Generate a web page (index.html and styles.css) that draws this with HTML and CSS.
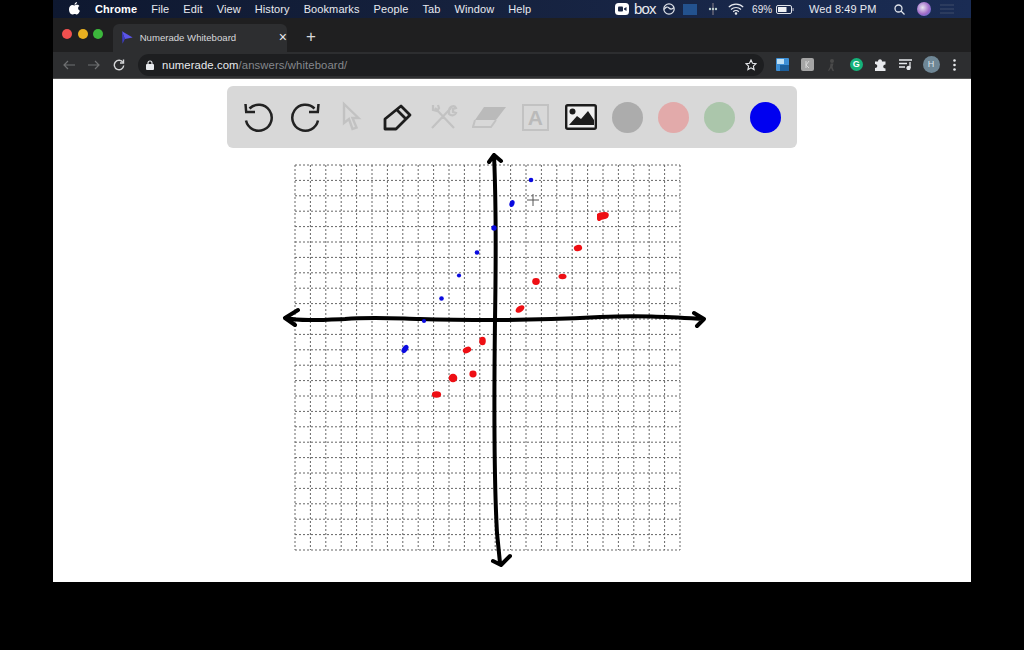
FILE: index.html
```html
<!DOCTYPE html>
<html lang="en">
<head>
    <meta charset="UTF-8">
    <meta name="viewport" content="width=device-width, initial-scale=1.0">
    <title>Numerade Whiteboard</title>
    <link rel="stylesheet" href="styles.css">
</head>
<body>
    <div class="screen">
        <!-- mac menu bar -->
        <div class="menubar">
            <svg class="apple" width="11" height="13" viewBox="0 0 11 13"><path d="M8 0c.1 1-.9 2.700-2.500 2.700C5.400 1.400 6.700.2 8 0zM5.500 3.400c.6 0 1.400-.6 2.500-.6 1 0 1.900.5 2.400 1.300-1.900 1.100-1.600 3.800.5 4.600-.6 1.500-1.700 3.700-3 3.700-.9 0-1.200-.5-2.200-.5s-1.400.5-2.200.5C1.200 12.400 0 9.500 0 7.200c0-2.700 1.700-4.300 3.300-4.300 1 0 1.700.5 2.200.5z" fill="#fff"/></svg>
            <span class="app-name">Chrome</span>
            <span>File</span>
            <span>Edit</span>
            <span>View</span>
            <span>History</span>
            <span>Bookmarks</span>
            <span>People</span>
            <span>Tab</span>
            <span>Window</span>
            <span>Help</span>
            <div class="status">
                <svg width="14" height="12" viewBox="0 0 14 12"><rect width="14" height="12" rx="3.500" fill="#fff"/><rect x="3" y="3.500" width="5" height="5" rx="1" fill="#1a2745"/><path d="M9 5.500l2.500-1.500v4L9 6.500z" fill="#1a2745"/></svg>
                <span class="box-logo">box</span>
                <svg class="st-sync" width="12" height="12" viewBox="0 0 12 12" fill="none" stroke="#dfe3ea" stroke-width="1.200"><circle cx="6" cy="6" r="5.200"/><path d="M1 6.500c2-3 3.500-3 5-1.500s3 1.500 5-.5"/></svg>
                <span class="blue-box"></span>
                <svg class="st-dots" width="10" height="12" viewBox="0 0 10 12"><path d="M5 0v12" stroke="#667" stroke-width="1.500"/><circle cx="2" cy="6" r="1.200" fill="#bcc"/><circle cx="5" cy="6" r="1.200" fill="#bcc"/><circle cx="8" cy="6" r="1.200" fill="#bcc"/></svg>
                <svg class="st-wifi" width="16" height="12" viewBox="0 0 16 12" fill="none" stroke="#e6e9ef" stroke-width="1.200"><path d="M.8 4.200c4-4 10.400-4 14.400 0M3 6.500c2.800-2.700 7.200-2.700 10 0M5.200 8.700c1.500-1.400 4.100-1.400 5.600 0"/><circle cx="8" cy="10.500" r=".7" fill="#e6e9ef"/></svg>
                <span class="battery-pct">69%</span>
                <svg class="st-battery" width="18" height="9" viewBox="0 0 18 9"><rect x=".5" y=".5" width="15" height="8" rx="1.500" fill="none" stroke="#dfe3ea"/><rect x="2" y="2" width="8.500" height="5" fill="#eef0f4"/><rect x="16.500" y="3" width="1.200" height="3" fill="#aab"/></svg>
                <span class="clock">Wed 8:49 PM</span>
                <svg class="st-search" width="11" height="11" viewBox="0 0 11 11" fill="none" stroke="#dfe3ea" stroke-width="1.300"><circle cx="4.500" cy="4.500" r="3.500"/><path d="M7 7l3.500 3.500"/></svg>
                <span class="siri"></span>
                <svg class="st-list" width="14" height="10" viewBox="0 0 14 10" stroke="#3f4c6b"><path d="M0 1h14M0 5h14M0 9h14"/></svg>
            </div>
        </div>

        <!-- chrome tabs -->
        <div class="tabstrip">
            <div class="lights">
                <span class="light red"></span>
                <span class="light yellow"></span>
                <span class="light green"></span>
            </div>
            <div class="tab">
                <svg width="13" height="13" viewBox="0 0 13 13"><path d="M1 0l11 6.500L4 8z" fill="#5b55ea"/><path d="M1 0l3 8-2.500 5z" fill="#3d3cc4"/></svg>
                <span class="tab-title">Numerade Whiteboard</span>
                <span class="tab-close">×</span>
            </div>
            <span class="new-tab">+</span>
        </div>

        <!-- chrome address bar -->
        <div class="addressbar">
            <svg width="12" height="10" viewBox="0 0 12 10" fill="none" stroke="#6f7072" stroke-width="1.200"><path d="M12 5H1M5 1L1 5l4 4"/></svg>
            <svg width="12" height="10" viewBox="0 0 12 10" fill="none" stroke="#6f7072" stroke-width="1.200"><path d="M0 5h11M7 1l4 4-4 4"/></svg>
            <svg width="12" height="12" viewBox="0 0 12 12" fill="none" stroke="#d5d6d8" stroke-width="1.400"><path d="M10 3.500A4.700 4.700 0 1 0 10.700 6.500"/><path d="M10.500 .5v3.500H7" /></svg>
            <div class="urlbar">
                <svg width="8" height="10" viewBox="0 0 8 10"><rect y="4" width="8" height="6" rx="1" fill="#e8eaed"/><path d="M2 4.500V3a2 2 0 0 1 4 0v1.500" fill="none" stroke="#e8eaed" stroke-width="1.100"/></svg>
                <span class="url"><span class="url-host">numerade.com</span>/answers/whiteboard/</span>
                <svg class="star" width="12" height="12" viewBox="0 0 12 12"><path d="M6 1l1.500 3.300 3.500.4-2.600 2.400.7 3.500L6 8.800l-3.100 1.800.7-3.500L1 4.700l3.500-.4z" fill="none" stroke="#e8eaed" stroke-width="1.100"/></svg>
            </div>
            <div class="extensions">
                <svg width="13" height="13" viewBox="0 0 13 13"><rect width="13" height="13" rx="1" fill="#3d8fd6"/><rect x="1" y="1" width="7" height="5" fill="#bfe0f5"/><rect x="4" y="7" width="9" height="6" fill="#1c5f9c"/></svg>
                <svg width="13" height="13" viewBox="0 0 13 13"><rect width="13" height="13" rx="2" fill="#a5a5a5"/><path d="M5 3v7M5 7l3-4M5 7l3 3" stroke="#d8d8d8" fill="none"/></svg>
                <svg width="13" height="13" viewBox="0 0 13 13" fill="#4a4a4a"><circle cx="7" cy="3" r="2"/><path d="M5.500 5.500h3L7.500 9 9 13H7.500L6 10l-2 3-1-.5L5 9z"/></svg>
                <span class="grammarly">G</span>
                <svg width="13" height="13" viewBox="0 0 13 13"><path d="M1 3.500h3c0-3 4-3 4 0h3.500v3c-3 0-3 4 0 4V13H1v-3c3 0 3-4 0-4z" fill="#e8eaed"/></svg>
                <svg width="14" height="11" viewBox="0 0 14 11" fill="none" stroke="#e8eaed" stroke-width="1.300"><path d="M0 1h13M0 4.500h8M0 8h6M11 3v6"/><circle cx="9.500" cy="9" r="1.500" fill="#e8eaed"/></svg>
                <span class="avatar">H</span>
                <svg width="3" height="12" viewBox="0 0 3 12" fill="#e8eaed"><circle cx="1.500" cy="1.500" r="1.300"/><circle cx="1.500" cy="6" r="1.300"/><circle cx="1.500" cy="10.500" r="1.300"/></svg>
            </div>
        </div>

        <!-- page -->
        <div class="page">
            <div class="toolbar">
                <button class="tool">
                    <svg width="32" height="32" viewBox="0 0 32 32" fill="none" stroke="#222" stroke-width="2.500"><path d="M6.500 7.500A13 13 0 1 1 3 19.500"/><path d="M2.500 3l.7 8h8.800"/></svg>
                </button>
                <button class="tool">
                    <svg width="32" height="32" viewBox="0 0 32 32" fill="none" stroke="#222" stroke-width="2.500"><path d="M25.500 7.500A13 13 0 1 0 29 19.500"/><path d="M29.500 3l-.7 8H20"/></svg>
                </button>
                <button class="tool">
                    <svg width="32" height="32" viewBox="0 0 32 32" fill="none" stroke="#c2c2c2" stroke-width="2.400"><path d="M9 3v19l5-4 3.500 10 4-1.500-4-9.500h6z"/></svg>
                </button>
                <button class="tool">
                    <svg width="32" height="32" viewBox="0 0 32 32" fill="none" stroke="#1c1c1c" stroke-width="2.800" stroke-linejoin="round"><path d="M4 18L20 5l9 9-14 14H4zM16 9l9 9"/></svg>
                </button>
                <button class="tool">
                    <svg width="32" height="32" viewBox="0 0 32 32" fill="none" stroke="#c2c2c2" stroke-width="2.200"><path d="M8 7l19 20M24 7L5 27M6 4v5l4 1 2-3-1-3M22 9c1-4 6-5 7-2l-3 1v3l3 1c-1 3-5 3-7 1z"/></svg>
                </button>
                <button class="tool">
                    <svg width="34" height="32" viewBox="0 0 34 32"><path d="M12 6h22L24 19H3z" fill="#bababa"/><path d="M3 19l-2 7h18l5-7" fill="none" stroke="#c2c2c2" stroke-width="2"/></svg>
                </button>
                <button class="tool">
                    <span class="text-tool">A</span>
                </button>
                <button class="tool">
                    <svg width="32" height="26" viewBox="0 0 32 26"><rect x="1.200" y="1.200" width="29.600" height="23.600" rx="1.500" fill="#f0f0f0" stroke="#1c1c1c" stroke-width="2.400"/><circle cx="7.500" cy="7.500" r="3" fill="#1c1c1c"/><path d="M4 21l8-9 4 3 7-8 6 9v5z" fill="#1c1c1c"/></svg>
                </button>
                <button class="tool"><span class="swatch swatch-gray"></span></button>
                <button class="tool"><span class="swatch swatch-red"></span></button>
                <button class="tool"><span class="swatch swatch-green"></span></button>
                <button class="tool"><span class="swatch swatch-blue"></span></button>
            </div>

            <!-- viewBox uses screen coordinates so the plot is easy to read off -->
            <svg class="board" width="440" height="422" viewBox="280 148 440 422">
                <path class="grid" d="M295 165V550M310.400 165V550M325.800 165V550M341.200 165V550M356.600 165V550M372 165V550M387.400 165V550M402.800 165V550M418.200 165V550M433.600 165V550M449 165V550M464.400 165V550M479.800 165V550M495.200 165V550M510.600 165V550M526 165V550M541.400 165V550M556.800 165V550M572.200 165V550M587.600 165V550M603 165V550M618.400 165V550M633.800 165V550M649.200 165V550M664.600 165V550M680 165V550"/>
                <path class="grid" d="M295 165H680M295 180.400H680M295 195.800H680M295 211.200H680M295 226.600H680M295 242H680M295 257.400H680M295 272.800H680M295 288.200H680M295 303.600H680M295 319H680M295 334.400H680M295 349.800H680M295 365.200H680M295 380.600H680M295 396H680M295 411.400H680M295 426.800H680M295 442.200H680M295 457.600H680M295 473H680M295 488.400H680M295 503.800H680M295 519.200H680M295 534.600H680M295 550H680"/>

                <path class="axis" d="M298 310L285 318L295 325M285 318C300 321 320 320 345 319C370 317 385 318 420 319C450 320 470 320 495 320C530 320 560 319 600 317C640 315 670 317 704 319M694 313L704 319L697 326"/>
                <path class="axis" d="M489 162L494 155L501 161M494 155C496 200 496 260 495 320C494 400 494 480 497 533L500 563M493 561L501 565L510 556"/>

                <g class="blue-dots">
                    <circle cx="531" cy="180" r="2.300"/>
                    <ellipse cx="512" cy="203.500" rx="2.500" ry="3.400" transform="rotate(20 512 203.500)"/>
                    <circle cx="494" cy="228" r="2.700"/>
                    <circle cx="477" cy="252.500" r="2.300"/>
                    <circle cx="459" cy="275.500" r="2.100"/>
                    <circle cx="441.500" cy="298.500" r="2.300"/>
                    <circle cx="424" cy="321" r="2.100"/>
                    <ellipse cx="405" cy="349" rx="2.800" ry="4.500" transform="rotate(35 405 349)"/>
                </g>
                <g class="red-dots">
                    <path d="M597 214c2-2 9-3 11-1s0 6-3 6l-4 1c-1 2-4 1-4-1z"/>
                    <ellipse cx="578" cy="248" rx="4.200" ry="3.200" transform="rotate(-15 578 248)"/>
                    <ellipse cx="562.500" cy="276.500" rx="4" ry="2.800"/>
                    <ellipse cx="536" cy="281.500" rx="3.800" ry="3.400"/>
                    <ellipse cx="520" cy="309" rx="5" ry="3" transform="rotate(-35 520 309)"/>
                    <ellipse cx="482.500" cy="341" rx="3.300" ry="4.200"/>
                    <ellipse cx="467" cy="350" rx="4.400" ry="3" transform="rotate(-25 467 350)"/>
                    <ellipse cx="473" cy="374" rx="3.600" ry="3.400"/>
                    <ellipse cx="453" cy="378" rx="4.300" ry="4.300"/>
                    <ellipse cx="436.500" cy="394.500" rx="4.600" ry="3.200"/>
                </g>
                <path class="cursor" d="M533 194V206M527 200H539"/>
            </svg>
        </div>
    </div>
</body>
</html>
```

FILE: styles.css
```css
html, body {
    height: 100%;
}

body {
    margin: 0;
    background-color: #000;
    font-family: "Liberation Sans", Arial, sans-serif;
    overflow: hidden;
}

.screen {
    width: 918px;
    margin-left: 53px;
    display: flex;
    flex-direction: column;
}

/* menu bar */
.menubar {
    height: 18px;
    display: flex;
    align-items: center;
    gap: 14px;
    padding-left: 16px;
    font-size: 11px;
    letter-spacing: 0.1px;
    color: #e8eaf0;
    white-space: nowrap;
    background: linear-gradient(90deg, #0e1830, #16223f 50%, #1a2c54);
}

.apple {
    margin-top: -2px;
    margin-right: 1px;
}

.app-name {
    font-weight: bold;
    color: #fff;
}

.status {
    margin-left: auto;
    display: flex;
    align-items: center;
    gap: 8px;
    padding-right: 17px;
}

.box-logo {
    width: 22px;
    margin-left: -3px;
    font-size: 15px;
    letter-spacing: -0.8px;
    margin-top: -2px;
}

.st-sync { margin-left: -1px; }
.st-dots { margin-left: 3px; }
.st-wifi { margin-left: 2px; }
.st-battery { margin-left: -4px; }
.st-search { margin-left: 10px; }
.st-list { margin-left: 1px; }

.blue-box {
    width: 14px;
    height: 11px;
    background-color: #23528f;
}

.battery-pct {
    width: 20px;
    font-size: 10px;
}

.clock {
    width: 67px;
    margin-left: 7px;
    font-size: 11px;
}

.siri {
    width: 14px;
    height: 14px;
    margin-left: 4px;
    border-radius: 50%;
    background: radial-gradient(circle at 40% 40%, #e8e4f0, #a06ac8 55%, #3f6fd0);
}

/* tabs */
.tabstrip {
    height: 34px;
    display: flex;
    align-items: flex-end;
    background-color: #1f1f20;
}

.lights {
    align-self: center;
    display: flex;
    gap: 5.500px;
    margin-top: -2px;
    padding-left: 9px;
    width: 51px;
}

.light {
    width: 10px;
    height: 10px;
    border-radius: 50%;
}

.red { background-color: #f0504f; }
.yellow { background-color: #e8b020; }
.green { background-color: #3cb83c; }

.tab {
    width: 174px;
    height: 28px;
    display: flex;
    align-items: center;
    padding-left: 8px;
    padding-bottom: 2px;
    gap: 6px;
    box-sizing: border-box;
    background-color: #2d2e30;
    border-radius: 6px 6px 0 0;
    color: #d8d9db;
    font-size: 9.600px;
}

.tab-title {
    width: 137px;
}

.tab-close {
    font-size: 14px;
    color: #e8eaed;
}

.new-tab {
    align-self: center;
    margin-left: 19px;
    margin-top: 4px;
    color: #d8d9db;
    font-size: 17px;
}

/* address bar */
.addressbar {
    height: 27px;
    display: flex;
    align-items: center;
    gap: 13px;
    padding-left: 10px;
    padding-bottom: 1px;
    background-color: #2d2e30;
    border-bottom: 1px solid #555;
    box-sizing: border-box;
}

.urlbar {
    width: 626px;
    height: 22px;
    display: flex;
    align-items: center;
    gap: 8px;
    padding-left: 8px;
    box-sizing: border-box;
    background-color: #1d1e20;
    border-radius: 11px;
}

.url {
    font-size: 11.300px;
    color: #85888c;
    letter-spacing: 0.1px;
}

.url-host {
    color: #e8eaed;
}

.star {
    margin-left: auto;
    margin-right: 7px;
}

.extensions {
    display: flex;
    align-items: center;
    gap: 11.600px;
    margin-left: -1px;
}

.grammarly {
    width: 13px;
    height: 13px;
    border-radius: 50%;
    background-color: #15b27a;
    color: #fff;
    font-size: 9px;
    font-weight: bold;
    text-align: center;
    line-height: 13px;
}

.avatar {
    width: 17px;
    height: 17px;
    margin-left: -2px;
    margin-right: 2px;
    border-radius: 50%;
    background-color: #6f8796;
    color: #dde3e7;
    font-size: 9px;
    text-align: center;
    line-height: 17px;
}

/* page */
.page {
    height: 503px;
    box-sizing: border-box;
    padding: 7px 0 0 174px;
    background-color: #fff;
    overflow: hidden;
}

.toolbar {
    width: 570px;
    height: 62px;
    padding-left: 9px;
    box-sizing: border-box;
    display: flex;
    align-items: center;
    background-color: #d8d8d8;
    border-radius: 6px;
}

.tool {
    flex: none;
    width: 46.050px;
    height: 46px;
    padding: 0;
    border: none;
    background: none;
    display: flex;
    align-items: center;
    justify-content: center;
}

.text-tool {
    width: 23px;
    height: 23px;
    border: 2px solid #c2c2c2;
    color: #bababa;
    font-size: 21px;
    font-weight: bold;
    line-height: 23px;
    text-align: center;
}

.swatch {
    width: 31px;
    height: 31px;
    border-radius: 50%;
}

.swatch-gray { background-color: #acacac; }
.swatch-red { background-color: #e2aaaa; }
.swatch-green { background-color: #abc6ab; }
.swatch-blue { background-color: #0000f0; }

.board {
    display: block;
    margin-left: 53px;
}

.grid {
    fill: none;
    stroke: #666;
    stroke-width: 1;
    stroke-dasharray: 2 2;
}

.axis {
    fill: none;
    stroke: #000;
    stroke-width: 4;
    stroke-linecap: round;
    stroke-linejoin: round;
}

.blue-dots {
    fill: #0a0ae0;
}

.red-dots {
    fill: #ee0f14;
}

.cursor {
    fill: none;
    stroke: #555;
    stroke-width: 1;
}
```
